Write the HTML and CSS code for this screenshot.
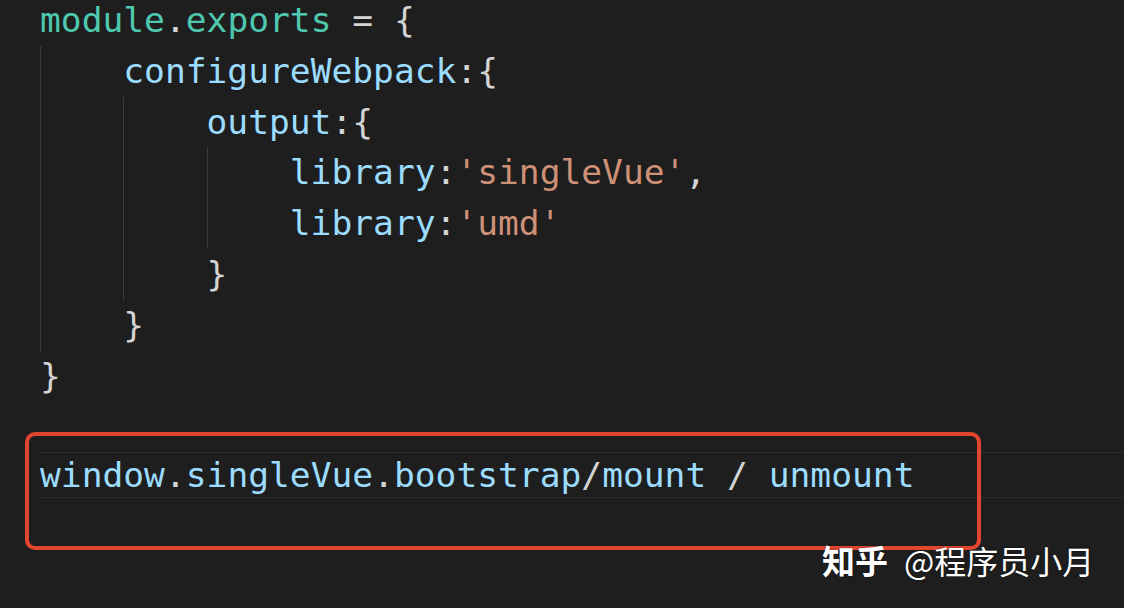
FILE: index.html
```html
<!DOCTYPE html>
<html lang="zh">
<head>
<meta charset="utf-8">
<title>vue.config.js</title>
<link rel="stylesheet" href="styles.css">
</head>
<body>
<div class="editor">
  <div class="code">
    <div class="line"><span class="t-mod">module</span><span class="t-op">.</span><span class="t-mod">exports</span><span class="t-op"> = {</span></div>
    <div class="block">
      <div class="line"><span class="t-key">configureWebpack</span><span class="t-op">:{</span></div>
      <div class="block">
        <div class="line"><span class="t-key">output</span><span class="t-op">:{</span></div>
        <div class="block">
          <div class="line"><span class="t-key">library</span><span class="t-op">:</span><span class="t-str">'singleVue'</span><span class="t-op">,</span></div>
          <div class="line"><span class="t-key">library</span><span class="t-op">:</span><span class="t-str">'umd'</span></div>
        </div>
        <div class="line"><span class="t-op">}</span></div>
      </div>
      <div class="line"><span class="t-op">}</span></div>
    </div>
    <div class="line"><span class="t-op">}</span></div>
    <div class="line"></div>
    <div class="line current"><span class="t-key">window</span><span class="t-op">.</span><span class="t-key">singleVue</span><span class="t-op">.</span><span class="t-key">bootstrap</span><span class="t-op">/</span><span class="t-key">mount</span><span class="t-op"> / </span><span class="t-key">unmount</span></div>
    <div class="line"></div>
  </div>
  <div class="annot"></div>
  <div class="watermark"><span class="wm-logo">知乎</span><span class="wm-user">@程序员小月</span></div>
</div>
</body>
</html>
```
FILE: styles.css
```css
html, body {
  margin: 0;
  padding: 0;
  background: #1e1e1e;
  overflow: hidden;
}

.editor {
  position: relative;
  width: 1124px;
  height: 608px;
  background: #1e1e1e;
  overflow: hidden;
}

.code {
  margin-top: -5px;
  padding-left: 40px;
  font-family: "DejaVu Sans Mono", "Liberation Mono", monospace;
  font-size: 34.6px;
  color: #d4d4d4;
}

.line {
  height: 50.8px;
  line-height: 50.8px;
  white-space: pre;
}

.block {
  border-left: 1px solid #3c3c3c;
  padding-left: calc(4ch - 1px);
}

.line.current {
  height: 44px;
  line-height: 44px;
  margin: 0 0 4.8px 0;
  border-top: 1px solid #2b2b2b;
  border-bottom: 1px solid #2b2b2b;
  margin-left: -2px;
  padding-left: 2px;
}

.t-mod { color: #4ec9b0; }
.t-key { color: #9cdcfe; }
.t-str { color: #ce9178; }
.t-op  { color: #d4d4d4; }

.annot {
  position: absolute;
  left: 25px;
  top: 432px;
  width: 948px;
  height: 110px;
  border: 4px solid #e3462f;
  border-radius: 10px;
}

.watermark {
  position: absolute;
  left: 822px;
  top: 538px;
  display: flex;
  align-items: center;
  gap: 16px;
  font-family: "Noto Sans CJK SC", sans-serif;
  color: #ffffff;
  font-size: 32px;
  line-height: 44px;
  text-shadow: 0 0 2px rgba(0,0,0,0.6);
}

.wm-logo {
  font-weight: 700;
  font-size: 33px;
}

.wm-user {
  font-weight: 400;
}
```
